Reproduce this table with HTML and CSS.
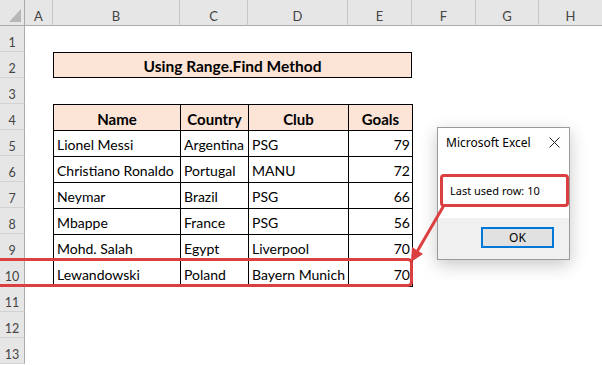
FILE: index.html
```html
<!DOCTYPE html>
<html lang="en">
<head>
<meta charset="utf-8">
<title>Using Range.Find Method</title>
<link rel="stylesheet" href="styles.css">
</head>
<body>
<div class="page">
  <div class="sheet">
    <div class="corner">
      <svg width="13" height="14" viewBox="0 0 13 14"><polygon points="12,0 12,13 0,13" fill="#b7b7b7"/></svg>
    </div>
    <div class="col-head">A</div>
    <div class="col-head">B</div>
    <div class="col-head">C</div>
    <div class="col-head">D</div>
    <div class="col-head">E</div>
    <div class="col-head">F</div>
    <div class="col-head">G</div>
    <div class="col-head">H</div>

    <div class="row-head">1</div>
    <div class="row-head">2</div>
    <div class="row-head">3</div>
    <div class="row-head">4</div>
    <div class="row-head">5</div>
    <div class="row-head">6</div>
    <div class="row-head">7</div>
    <div class="row-head">8</div>
    <div class="row-head">9</div>
    <div class="row-head">10</div>
    <div class="row-head">11</div>
    <div class="row-head">12</div>
    <div class="row-head">13</div>

    <div class="title">Using Range.Find Method</div>

    <div class="data">
      <div class="th">Name</div>
      <div class="th">Country</div>
      <div class="th">Club</div>
      <div class="th">Goals</div>

      <div>Lionel Messi</div>
      <div>Argentina</div>
      <div>PSG</div>
      <div class="num">79</div>

      <div>Christiano Ronaldo</div>
      <div>Portugal</div>
      <div>MANU</div>
      <div class="num">72</div>

      <div>Neymar</div>
      <div>Brazil</div>
      <div>PSG</div>
      <div class="num">66</div>

      <div>Mbappe</div>
      <div>France</div>
      <div>PSG</div>
      <div class="num">56</div>

      <div>Mohd. Salah</div>
      <div>Egypt</div>
      <div>Liverpool</div>
      <div class="num">70</div>

      <div>Lewandowski</div>
      <div>Poland</div>
      <div>Bayern Munich</div>
      <div class="num">70</div>
    </div>
  </div>

  <div class="row-mark"></div>

  <div class="dialog">
    <div class="dialog-title">
      <span>Microsoft Excel</span>
      <svg class="close" width="11" height="11" viewBox="0 0 11 11"><path d="M0.5 0.5 L10.5 10.5 M10.5 0.5 L0.5 10.5" stroke="#222" stroke-width="1" fill="none"/></svg>
    </div>
    <div class="message">Last used row: 10</div>
    <div class="dialog-footer">
      <div class="ok">OK</div>
    </div>
  </div>

  <svg class="arrow" width="602" height="365" viewBox="0 0 602 365">
    <line x1="443" y1="207" x2="418" y2="250" stroke="#dc3f3f" stroke-width="3" stroke-linecap="round"/>
    <polygon points="411,262 423,254 412,247" fill="#dc3f3f"/>
  </svg>
</div>
</body>
</html>
```

FILE: styles.css
```css
* {
  box-sizing: border-box;
}

body {
  margin: 0;
  background: #ffffff;
}

.page {
  position: relative;
  width: 602px;
  height: 365px;
  overflow: hidden;
  font-family: Lato, "Liberation Sans", sans-serif;
  color: #000;
}

/* worksheet grid: row header + columns A..H */
.sheet {
  display: grid;
  grid-template-columns: 25px 28px 127px 68px 100px 64px 64px 63px 64px;
  grid-auto-rows: 26px;
}

.corner {
  background: #e6e6e6;
  border-right: 1px solid #ababab;
  border-bottom: 1px solid #ababab;
  display: flex;
  align-items: flex-end;
  justify-content: flex-end;
  padding: 0 2px 2px 0;
}

.col-head {
  background: #e6e6e6;
  border-right: 1px solid #c8c8c8;
  border-bottom: 1px solid #ababab;
  color: #444;
  font-size: 13px;
  display: flex;
  align-items: center;
  justify-content: center;
  padding-top: 6px;
}

.row-head {
  grid-column: 1;
  background: #e6e6e6;
  border-right: 1px solid #ababab;
  border-bottom: 1px solid #d2d2d2;
  color: #444;
  font-size: 12.5px;
  display: flex;
  align-items: center;
  justify-content: center;
  padding-top: 8px;
}

.title {
  grid-row: 3;
  grid-column: 3 / span 4;
  border: 1px solid #000;
  background: #fce4d6;
  font-weight: 700;
  font-size: 15.5px;
  display: flex;
  align-items: center;
  justify-content: center;
  padding-top: 1px;
}

.data {
  grid-row: 5 / span 7;
  grid-column: 3 / span 4;
  align-self: start;
  justify-self: start;
  display: grid;
  grid-template-columns: 127px 68px 100px 64px;
  grid-auto-rows: 26px;
  border-right: 1px solid #000;
  border-bottom: 1px solid #000;
  font-size: 14px;
}

.data > div {
  border-left: 1px solid #000;
  border-top: 1px solid #000;
  display: flex;
  align-items: center;
  padding: 2px 3px 0 3px;
  white-space: nowrap;
}

.data > .th {
  background: #fce4d6;
  font-weight: 700;
  font-size: 15px;
  justify-content: center;
}

.data > .num {
  justify-content: flex-end;
  padding-right: 2px;
}

/* red outline drawn over row 10 */
.row-mark {
  position: absolute;
  left: -6px;
  top: 258px;
  width: 419px;
  height: 29px;
  border: 3px solid #dc3f3f;
  border-radius: 5px;
}

/* message box */
.dialog {
  position: absolute;
  left: 437px;
  top: 127px;
  width: 133px;
  height: 133px;
  border: 1px solid #9a9a9a;
  background: #fff;
  display: flex;
  flex-direction: column;
  box-shadow: 0 5px 16px rgba(0, 0, 0, 0.22);
  font-family: "Noto Sans", "Open Sans", sans-serif;
  color: #000;
}

.dialog-title {
  height: 28px;
  display: flex;
  align-items: center;
  justify-content: space-between;
  padding: 0 9px 0 8px;
  font-size: 12px;
}

.close {
  display: block;
}

.message {
  margin: 18px 0 0 2px;
  width: 129px;
  height: 33px;
  border: 3px solid #dc3f3f;
  border-radius: 4px;
  font-size: 11px;
  display: flex;
  align-items: center;
  padding-left: 7px;
}

.dialog-footer {
  margin-top: 11px;
  flex: 1;
  background: #f0f0f0;
  display: flex;
  justify-content: flex-end;
  align-items: flex-start;
  padding: 9px 15px 0 0;
}

.ok {
  width: 73px;
  height: 21px;
  border: 2px solid #0078d7;
  background: #e1e1e1;
  font-size: 12px;
  display: flex;
  align-items: center;
  justify-content: center;
}

.arrow {
  position: absolute;
  left: 0;
  top: 0;
  pointer-events: none;
}
```
